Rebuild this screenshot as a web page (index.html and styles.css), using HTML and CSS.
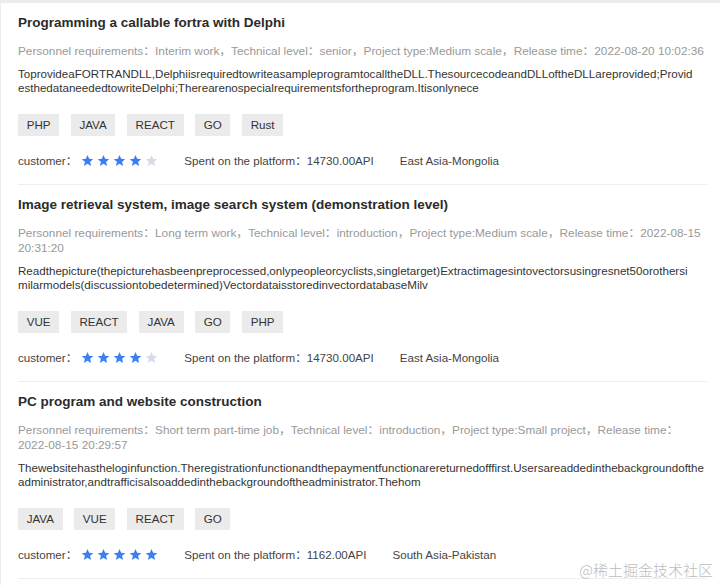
FILE: index.html
```html
<!DOCTYPE html>
<html>
<head>
<meta charset="utf-8">
<link rel="stylesheet" href="styles.css">
</head>
<body>
<div class="card">
  <div class="item">
    <div class="title">Programming a callable fortra with Delphi</div>
    <div class="meta">Personnel requirements：Interim work，Technical level：senior，Project type:Medium scale，Release time：<span class="nw">2022-08-20</span> 10:02:36</div>
    <div class="desc">ToprovideaFORTRANDLL,DelphiisrequiredtowriteasampleprogramtocalltheDLL.ThesourcecodeandDLLoftheDLLareprovided;Provid<br>esthedataneededtowriteDelphi;Therearenospecialrequirementsfortheprogram.Itisonlynece</div>
    <div class="tags"><span class="tag">PHP</span><span class="tag">JAVA</span><span class="tag">REACT</span><span class="tag">GO</span><span class="tag">Rust</span></div>
    <div class="footer">
      <span class="label">customer：</span>
      <span class="stars">
        <svg class="star on" viewBox="0 0 24 24"><path d="M12 1.8l3 7 7.6.7-5.8 5 1.8 7.5L12 18.1 5.4 22l1.8-7.5-5.8-5 7.6-.7z"/></svg>
        <svg class="star on" viewBox="0 0 24 24"><path d="M12 1.8l3 7 7.6.7-5.8 5 1.8 7.5L12 18.1 5.4 22l1.8-7.5-5.8-5 7.6-.7z"/></svg>
        <svg class="star on" viewBox="0 0 24 24"><path d="M12 1.8l3 7 7.6.7-5.8 5 1.8 7.5L12 18.1 5.4 22l1.8-7.5-5.8-5 7.6-.7z"/></svg>
        <svg class="star on" viewBox="0 0 24 24"><path d="M12 1.8l3 7 7.6.7-5.8 5 1.8 7.5L12 18.1 5.4 22l1.8-7.5-5.8-5 7.6-.7z"/></svg>
        <svg class="star off" viewBox="0 0 24 24"><path d="M12 1.8l3 7 7.6.7-5.8 5 1.8 7.5L12 18.1 5.4 22l1.8-7.5-5.8-5 7.6-.7z"/></svg>
      </span>
      <span class="spent">Spent on the platform：14730.00API</span>
      <span class="region">East Asia-Mongolia</span>
    </div>
  </div>
  <div class="item">
    <div class="title">Image retrieval system, image search system (demonstration level)</div>
    <div class="meta">Personnel requirements：Long term work，Technical level：introduction，Project type:Medium scale，Release time：<span class="nw">2022-08-15</span> 20:31:20</div>
    <div class="desc">Readthepicture(thepicturehasbeenpreprocessed,onlypeopleorcyclists,singletarget)Extractimagesintovectorsusingresnet50orothersi<br>milarmodels(discussiontobedetermined)VectordataisstoredinvectordatabaseMilv</div>
    <div class="tags"><span class="tag">VUE</span><span class="tag">REACT</span><span class="tag">JAVA</span><span class="tag">GO</span><span class="tag">PHP</span></div>
    <div class="footer">
      <span class="label">customer：</span>
      <span class="stars">
        <svg class="star on" viewBox="0 0 24 24"><path d="M12 1.8l3 7 7.6.7-5.8 5 1.8 7.5L12 18.1 5.4 22l1.8-7.5-5.8-5 7.6-.7z"/></svg>
        <svg class="star on" viewBox="0 0 24 24"><path d="M12 1.8l3 7 7.6.7-5.8 5 1.8 7.5L12 18.1 5.4 22l1.8-7.5-5.8-5 7.6-.7z"/></svg>
        <svg class="star on" viewBox="0 0 24 24"><path d="M12 1.8l3 7 7.6.7-5.8 5 1.8 7.5L12 18.1 5.4 22l1.8-7.5-5.8-5 7.6-.7z"/></svg>
        <svg class="star on" viewBox="0 0 24 24"><path d="M12 1.8l3 7 7.6.7-5.8 5 1.8 7.5L12 18.1 5.4 22l1.8-7.5-5.8-5 7.6-.7z"/></svg>
        <svg class="star off" viewBox="0 0 24 24"><path d="M12 1.8l3 7 7.6.7-5.8 5 1.8 7.5L12 18.1 5.4 22l1.8-7.5-5.8-5 7.6-.7z"/></svg>
      </span>
      <span class="spent">Spent on the platform：14730.00API</span>
      <span class="region">East Asia-Mongolia</span>
    </div>
  </div>
  <div class="item">
    <div class="title">PC program and website construction</div>
    <div class="meta">Personnel requirements：Short term part-time job，Technical level：introduction，Project type:Small project，Release time：<span class="nw">2022-08-15</span> 20:29:57</div>
    <div class="desc">Thewebsitehastheloginfunction.Theregistrationfunctionandthepaymentfunctionarereturnedofffirst.Usersareaddedinthebackgroundofthe<br>administrator,andtrafficisalsoaddedinthebackgroundoftheadministrator.Thehom</div>
    <div class="tags"><span class="tag">JAVA</span><span class="tag">VUE</span><span class="tag">REACT</span><span class="tag">GO</span></div>
    <div class="footer">
      <span class="label">customer：</span>
      <span class="stars">
        <svg class="star on" viewBox="0 0 24 24"><path d="M12 1.8l3 7 7.6.7-5.8 5 1.8 7.5L12 18.1 5.4 22l1.8-7.5-5.8-5 7.6-.7z"/></svg>
        <svg class="star on" viewBox="0 0 24 24"><path d="M12 1.8l3 7 7.6.7-5.8 5 1.8 7.5L12 18.1 5.4 22l1.8-7.5-5.8-5 7.6-.7z"/></svg>
        <svg class="star on" viewBox="0 0 24 24"><path d="M12 1.8l3 7 7.6.7-5.8 5 1.8 7.5L12 18.1 5.4 22l1.8-7.5-5.8-5 7.6-.7z"/></svg>
        <svg class="star on" viewBox="0 0 24 24"><path d="M12 1.8l3 7 7.6.7-5.8 5 1.8 7.5L12 18.1 5.4 22l1.8-7.5-5.8-5 7.6-.7z"/></svg>
        <svg class="star on" viewBox="0 0 24 24"><path d="M12 1.8l3 7 7.6.7-5.8 5 1.8 7.5L12 18.1 5.4 22l1.8-7.5-5.8-5 7.6-.7z"/></svg>
      </span>
      <span class="spent">Spent on the platform：1162.00API</span>
      <span class="region">South Asia-Pakistan</span>
    </div>
  </div>
  <div class="watermark">@稀土掘金技术社区</div>
</div>
</body>
</html>
```

FILE: styles.css
```css
html, body {
  margin: 0;
  padding: 0;
}
body {
  background: #ececec;
  font-family: "Liberation Sans", Arial, "Noto Sans CJK SC", sans-serif;
  color: #333;
  height: 585px;
  overflow: hidden;
}
.card {
  position: relative;
  margin: 3px 0 0 1px;
  padding-left: 17px;
  background: #fff;
  height: 582px;
}
.item {
  width: 689px;
  padding: 10px 0 14px;
  border-bottom: 1px solid #eeeeee;
}
.title {
  font-size: 13.5px;
  font-weight: bold;
  line-height: 20px;
  color: #2b2b2b;
}
.meta {
  margin-top: 11px;
  font-size: 11.8px;
  line-height: 15px;
  color: #999;
}
.nw {
  white-space: nowrap;
}
.desc {
  margin-top: 8px;
  font-size: 11.6px;
  line-height: 14px;
  color: #333;
  word-break: break-all;
}
.tags {
  margin-top: 19px;
  display: flex;
  gap: 11.5px;
}
.tag {
  height: 22px;
  line-height: 22px;
  padding: 0 8.7px;
  background: #ebebeb;
  font-size: 11.6px;
  color: #333;
}
.footer {
  margin-top: 14px;
  height: 20px;
  display: flex;
  align-items: center;
  font-size: 11.6px;
  color: #444;
}
.stars {
  display: flex;
  gap: 3px;
  margin-left: 4px;
  margin-right: 26px;
}
.star {
  width: 13px;
  height: 13px;
}
.star.on {
  fill: #3b7ff5;
}
.star.off {
  fill: #d6dce6;
}
.spent {
  margin-right: 26px;
}
.watermark {
  position: absolute;
  right: 7px;
  bottom: 5px;
  font-size: 15px;
  color: #bdbdbd;
  font-family: "Noto Sans CJK SC", sans-serif;
  font-weight: 300;
}
```
